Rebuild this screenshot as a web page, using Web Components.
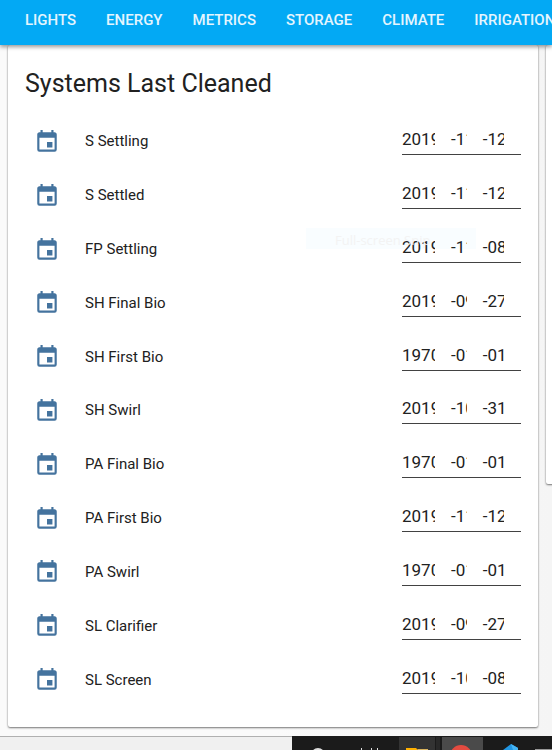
<!DOCTYPE html>
<html lang="en">
<head>
<meta charset="utf-8">
<title>Systems Last Cleaned</title>
<style>
  body { margin: 0; background: #fafafa; color: #212121; font-family: Roboto, "Liberation Sans", sans-serif; }
</style>
</head>
<body>
<dash-app></dash-app>
<script>
const define = (name, html, setup) => {
  const template = document.createElement('template');
  template.innerHTML = html;
  customElements.define(name, class extends HTMLElement {
    constructor() {
      super();
      this.attachShadow({ mode: 'open' }).append(template.content.cloneNode(true));
    }
    connectedCallback() { if (setup) setup(this, this.shadowRoot); }
  });
};

define('dash-tabs', `
<style>
  :host { display: block; position: relative; z-index: 1; background: #03a9f4; box-shadow: 0 2px 4px rgba(0,0,0,.4); }
  nav { display: flex; gap: 30px; height: 45px; padding: 0 25px; box-sizing: border-box; overflow: hidden; }
  a { flex: none; color: #e4f5fe; font-size: 15px; font-weight: 500; line-height: 40px; text-decoration: none; }
</style>
<nav><a href="#lights">LIGHTS</a><a href="#energy">ENERGY</a><a href="#metrics">METRICS</a><a href="#storage">STORAGE</a><a href="#climate">CLIMATE</a><a href="#irrigation">IRRIGATION</a></nav>`);

define('dash-card', `
<style>
  :host { display: block; background: #fff; border-radius: 2px; box-shadow: 0 1px 2px rgba(0,0,0,.5), 0 0 2px rgba(0,0,0,.15); }
</style>
<slot></slot>`);

define('calendar-icon', `
<style>
  :host { display: block; width: 26px; height: 26px; }
  svg { display: block; width: 100%; height: 100%; fill: #44739e; }
</style>
<svg viewBox="0 0 24 24" aria-hidden="true"><path d="M19,19H5V8H19M16,1V3H8V1H6V3H5C3.89,3 3,3.89 3,5V19A2,2 0 0,0 5,21H19A2,2 0 0,0 21,19V5C21,3.89 20.1,3 19,3H18V1M17,12H12V17H17V12Z"/></svg>`);

define('date-row', `
<style>
  :host { display: grid; grid-template-columns: 60px 1fr 119px; align-items: center; }
  calendar-icon { margin: 2px 0 0 9px; }
  .name { font-size: 15px; line-height: 20px; padding-top: 1px; }
  .date { box-sizing: border-box; display: flex; align-items: center; height: 29px; padding-bottom: 2px; border-bottom: 1px solid #424242; font-size: 17px; line-height: 24px; }
  input { box-sizing: border-box; border: 0; padding: 0; margin: 0 16px 0 0; background: none; outline: 0; color: inherit; font: inherit; height: 24px; }
  .y { width: 33px; } .m { width: 11px; } .d { width: 17px; margin: 0; }
</style>
<calendar-icon></calendar-icon>
<label class="name" for="y"></label>
<div class="date" role="group"><input class="y" id="y"><span>-</span><input class="m" aria-label="Month"><span>-</span><input class="d" aria-label="Day"></div>`,
(el, root) => {
  root.querySelector('.name').textContent = el.getAttribute('name');
  const parts = el.getAttribute('date').split('-');
  root.querySelectorAll('input').forEach((input, i) => { input.value = parts[i]; });
});

define('snip-tooltip', `
<style>
  :host { position: absolute; left: 306px; top: 228px; width: 170px; height: 21px; background: rgba(3,150,244,.025); color: #f3f3f3; font: 13px/24px "Open Sans", sans-serif; padding-left: 29px; box-sizing: border-box; pointer-events: none; }
</style>
Full-screen Snip`);

define('task-bar', `
<style>
  :host { display: flex; height: 14px; overflow: hidden; background: #f0f0f0; }
  .idle { flex: 292 1 0; border-top: 1px solid #b0b0b0; }
  .apps { flex: 260 1 0; background: #1b1b1b; overflow: hidden; }
  svg { display: block; width: 260px; height: 14px; }
</style>
<div class="idle"></div>
<div class="apps"><svg viewBox="0 0 260 14" aria-hidden="true">
  <path d="M107 1h36v13h-36z" fill="#333"/><path d="M144 1h4v13h-4z" fill="#292929"/><path d="M150 1h41v13h-41z" fill="#4a4a4a"/>
  <circle cx="26" cy="19" r="6" fill="none" stroke="#ddd" stroke-width="2"/>
  <path d="M69.500 12v2M79.500 12v2M85.500 12v2" stroke="#ddd"/>
  <path d="M114 12h10l2 2h-12z" fill="#ffb000"/><path d="M125 13h11v1h-10z" fill="#d8b35e"/>
  <circle cx="169" cy="20" r="11" fill="#e44b40"/>
  <path d="M211 14l8-6 7 4v2z" fill="#2196e3"/><path d="M219 8l7 4v2h-5z" fill="#45b5f5"/>
  <path d="M243 13h17v1h-17z" fill="#999"/>
</svg></div>`);

define('dash-app', `
<style>
  :host { display: flex; flex-direction: column; min-height: 100vh; overflow: hidden; }
  main { flex: 1; display: grid; grid-template-columns: 1fr 6px; gap: 8px; align-items: start; padding: 0 0 9px 8px; background: linear-gradient(90deg, #fafafa 50%, #f5f5f5); }
  h1 { margin: 0; padding: 22px 17px 13px; font-size: 25px; line-height: 34px; font-weight: 400; }
  .rows { display: grid; grid-auto-rows: 1fr; min-height: 592px; padding: 0 17px 21px; }
  .side { height: 439px; margin-right: -8px; }
</style>
<dash-tabs></dash-tabs>
<main>
  <dash-card>
    <h1>Systems Last Cleaned</h1>
    <div class="rows">
      <date-row name="S Settling" date="2019-11-12"></date-row>
      <date-row name="S Settled" date="2019-11-12"></date-row>
      <date-row name="FP Settling" date="2019-11-08"></date-row>
      <date-row name="SH Final Bio" date="2019-09-27"></date-row>
      <date-row name="SH First Bio" date="1970-01-01"></date-row>
      <date-row name="SH Swirl" date="2019-10-31"></date-row>
      <date-row name="PA Final Bio" date="1970-01-01"></date-row>
      <date-row name="PA First Bio" date="2019-11-12"></date-row>
      <date-row name="PA Swirl" date="1970-01-01"></date-row>
      <date-row name="SL Clarifier" date="2019-09-27"></date-row>
      <date-row name="SL Screen" date="2019-10-08"></date-row>
    </div>
  </dash-card>
  <dash-card class="side"></dash-card>
</main>
<task-bar></task-bar>
<snip-tooltip></snip-tooltip>`);
</script>
</body>
</html>
